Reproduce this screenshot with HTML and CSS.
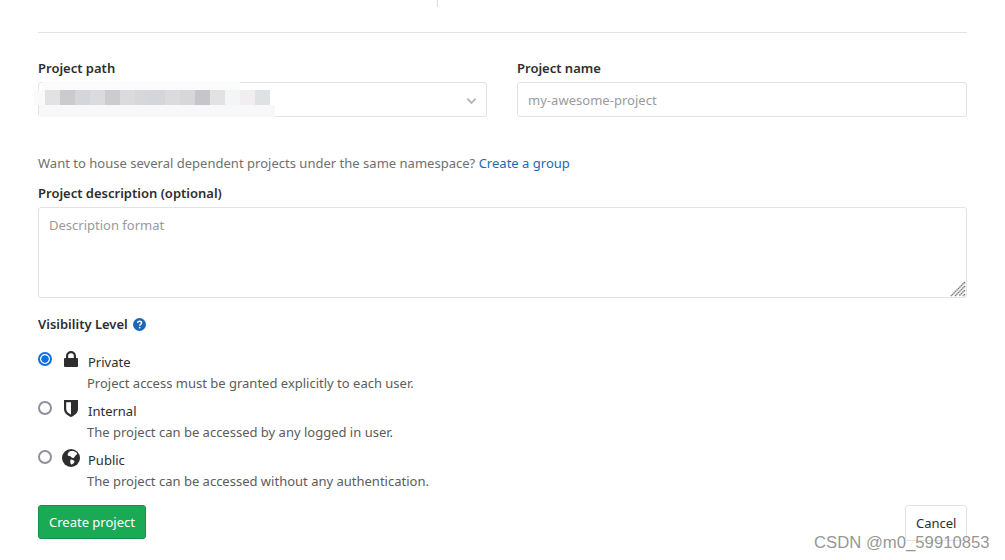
FILE: index.html
```html
<!DOCTYPE html>
<html lang="en">
<head>
<meta charset="utf-8">
<title>New project</title>
<link rel="stylesheet" href="styles.css">
</head>
<body>
<div class="page">
  <div class="top-tick"></div>
  <hr class="rule">
  <div class="two-col">
    <div class="field">
      <label class="label">Project path</label>
      <div class="control select">
        <svg class="chevron" viewBox="0 0 12 8" width="11" height="8"><path d="M1.5 1.5 6 6l4.500-4.500" fill="none" stroke="#b5b5b5" stroke-width="2"/></svg>
        <div class="smudge">
          <div class="smudge-top"></div>
          <div class="smudge-mid">
            <i class="c1"></i><i class="c2"></i><i class="c3"></i><i class="c4"></i><i class="c5"></i><i class="c4"></i><i class="c6"></i><i class="c3"></i><i class="c4"></i><i class="c6"></i><i class="c7"></i><i class="c1"></i><i class="c8"></i><i class="c9"></i><i class="c10"></i>
          </div>
          <div class="smudge-bot"></div>
        </div>
      </div>
    </div>
    <div class="field">
      <label class="label">Project name</label>
      <div class="control placeholder">my-awesome-project</div>
    </div>
  </div>
  <p class="hint">Want to house several dependent projects under the same namespace? <a class="link">Create a group</a></p>
  <label class="label desc-label">Project description (optional)</label>
  <div class="textarea">
    <span class="placeholder-text">Description format</span>
    <svg class="grip" viewBox="0 0 16 16" width="16" height="16"><path d="M15 1 1 15M15 5 5 15M15 9 9 15M15 13 13 15" stroke="#6f6f6f" stroke-width="1.4" stroke-dasharray="1.6 .5" fill="none"/></svg>
  </div>
  <div class="vis-title">
    <span class="label">Visibility Level</span>
    <svg class="help" viewBox="0 0 14 14" width="13" height="13"><circle cx="7" cy="7" r="7" fill="#1b69b6"/><path d="M4.900 5.400C5 4.200 5.900 3.500 7.100 3.500c1.200 0 2.100.8 2.100 1.800 0 1.600-2 1.600-2 3" fill="none" stroke="#fff" stroke-width="1.500"/><circle cx="7.200" cy="10.300" r=".95" fill="#fff"/></svg>
  </div>
  <div class="options">
    <div class="option">
      <span class="radio on"></span>
      <svg class="vis-icon" viewBox="0 0 14 16" width="14" height="16"><path d="M2 7V5a5 5 0 0 1 10 0v2h1a1 1 0 0 1 1 1v7a1 1 0 0 1-1 1H1a1 1 0 0 1-1-1V8a1 1 0 0 1 1-1zm2.200 0h5.600V5a2.800 2.800 0 0 0-5.600 0z" fill="#2e2e2e"/></svg>
      <div class="opt-text"><div class="opt-name">Private</div><div class="opt-desc">Project access must be granted explicitly to each user.</div></div>
    </div>
    <div class="option">
      <span class="radio"></span>
      <svg class="vis-icon" viewBox="0 0 14 17" width="14" height="17"><path fill-rule="evenodd" d="M0 0h14v9c0 4-3.500 6.500-7 8-3.500-1.500-7-4-7-8zm7 2.200H2.200V9c0 2.500 2.200 4.300 4.800 5.600z" fill="#2e2e2e"/></svg>
      <div class="opt-text"><div class="opt-name">Internal</div><div class="opt-desc">The project can be accessed by any logged in user.</div></div>
    </div>
    <div class="option">
      <span class="radio"></span>
      <svg class="vis-icon globe" viewBox="0 0 18 18" width="18" height="18"><circle cx="9" cy="9" r="9" fill="#2e2e2e"/><path d="M8 2.200c2.500-.6 5-.1 7 1.800.3 2-1.500 2-2.200 3.500-.7 1.800-2.600 2-3.600.5C8.200 6.800 5.400 7.500 5.700 5.300 5.900 3.800 7 3 8 2.200zM8.800 10.500c1.500-.2 3 .8 3.800 2-.5 1.600-1.900 2.700-3.400 3-.8-1.300-1.500-3.300-.4-5z" fill="#fff"/></svg>
      <div class="opt-text"><div class="opt-name">Public</div><div class="opt-desc">The project can be accessed without any authentication.</div></div>
    </div>
  </div>
  <div class="actions">
    <button class="btn btn-create">Create project</button>
    <button class="btn btn-cancel">Cancel</button>
  </div>
</div>
<div class="watermark">CSDN @m0_59910853</div>
</body>
</html>
```
FILE: styles.css
```css
* { box-sizing: border-box; }
html, body { margin: 0; height: 100%; background: #fff; overflow: hidden; }
body { position: relative; font-family: "Noto Sans", "Open Sans", sans-serif; font-size: 13px; color: #2e2e2e; }
.page { padding: 0 38px; width: 1005px; }
.top-tick { width: 1px; height: 7px; background: #dcdcdc; margin-left: 399px; }
.rule { border: 0; border-top: 1px solid #e3e3e3; margin: 25px 0 0; }
.two-col { display: grid; grid-template-columns: 449px 450px; column-gap: 30px; margin-top: 26px; }
.label { display: block; font-weight: 600; font-size: 13px; line-height: 18px; color: #2e2e2e; }
.vis-title .label { display: inline; }
.control { margin-top: 5px; height: 35px; border: 1px solid #e3e3e3; border-radius: 3px; position: relative; }
.placeholder { padding: 0 10px; line-height: 34px; letter-spacing: .03px; color: #9a9a9a; }
.chevron { position: absolute; right: 9px; top: 14px; }
.smudge { position: absolute; left: -5px; top: -1px; width: 245px; height: 36px; }
.smudge-top { height: 8px; margin-left: 8px; width: 198px; background: #fbfbfb; }
.smudge-mid { display: flex; height: 15px; padding-left: 11px; width: 236px; background: #fafafa; }
.smudge-mid i { flex: 0 0 15px; }
.c1 { background: #e2e2e4; } .c2 { background: #cbcbcd; } .c3 { background: #d3d7db; } .c4 { background: #dbdbdd; } .c5 { background: #cbccd0; } .c6 { background: #d7d7d9; } .c7 { background: #c6c6ca; } .c8 { background: #f4f5f7; } .c9 { background: #f0eeef; } .c10 { background: #dfe2e4; }
.smudge-bot { height: 12px; margin-left: 5px; width: 236px; background: #f8f8fa; }
.hint { margin: 37px 0 0; line-height: 18px; letter-spacing: .015px; color: #707070; }
.link { color: #1b69b6; }
.desc-label { margin-top: 12px; }
.textarea { margin-top: 5px; height: 91px; border: 1px solid #e3e3e3; border-radius: 3px; position: relative; padding: 8px 10px; line-height: 18px; }
.placeholder-text { color: #9a9a9a; }
.grip { position: absolute; right: 0; bottom: 0; }
.vis-title { display: flex; align-items: center; gap: 5px; margin-top: 17px; height: 18px; }
.options { margin-top: 16px; display: flex; flex-direction: column; gap: 9px; }
.option { display: flex; align-items: flex-start; height: 40px; }
.radio { flex: none; width: 14px; height: 14px; border-radius: 50%; border: 2px solid #8f8f9d; background: #fff; margin-top: 3px; }
.radio.on { border-color: #0b6fe6; background: radial-gradient(circle, #0b6fe6 0 3.4px, #fff 4px); }
.vis-icon { flex: none; margin: 2px 0 0 12px; }
.globe { margin: 2px 0 0 10px; }
.opt-text { margin-left: 9px; padding-top: 4px; }
.globe + .opt-text { margin-left: 7px; }
.opt-name { line-height: 18px; color: #2e2e2e; margin-left: 1px; }
.opt-desc { line-height: 18px; margin-top: 3px; color: #5c5c5c; }
.actions { display: flex; justify-content: space-between; align-items: flex-start; margin-top: 18px; }
.btn { font-family: inherit; font-size: 13px; height: 34px; border-radius: 3px; padding: 0 10px; }
.btn-create { background: #1aaa55; border: 1px solid #168f48; color: #fff; width: 108px; }
.btn-cancel { background: #fff; border: 1px solid #e3e3e3; color: #2e2e2e; width: 62px; height: 36px; }
.watermark { position: absolute; left: 814px; top: 533px; font-family: "Liberation Sans", sans-serif; font-size: 16.7px; line-height: 20px; color: rgba(130,130,130,.85); white-space: nowrap; }
```
